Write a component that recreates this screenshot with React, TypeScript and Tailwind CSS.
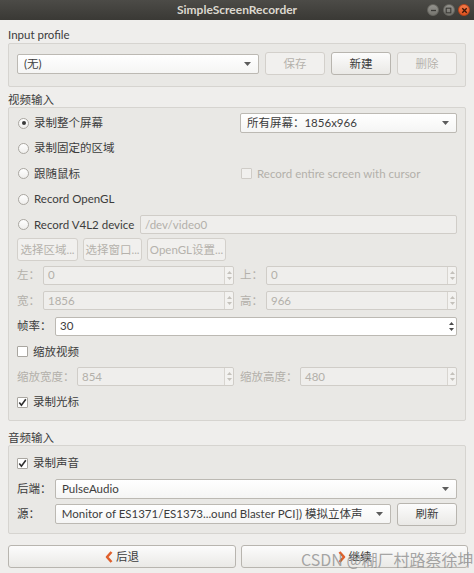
import type { ReactNode } from 'react';

const ink = 'text-[#3c3c3c]';
const dim = 'text-[#b3b0aa]';

function ArrowDown() {
  return (
    <svg width="7" height="4" viewBox="0 0 7 4" className="shrink-0">
      <path d="M0 0h7L3.5 4z" fill="#5c5c5c" />
    </svg>
  );
}

function Combo({ text, className = '' }: { text: string; className?: string }) {
  return (
    <div
      className={`flex h-[20px] items-center justify-between rounded-[2px] border border-[#bcb9b3] bg-linear-to-b from-white to-[#f5f5f4] pl-[6px] pr-[7px] ${ink} ${className}`}
    >
      <span className="truncate">{text}</span>
      <ArrowDown />
    </div>
  );
}

function Btn({
  children,
  disabled = false,
  className = '',
}: {
  children: ReactNode;
  disabled?: boolean;
  className?: string;
}) {
  return (
    <div
      className={`flex h-[23px] shrink-0 items-center justify-center rounded-[3px] border ${
        disabled
          ? 'border-[#d3d0cb] bg-[#f1f0ee] text-[#b5b2ac]'
          : 'border-[#b8b5af] bg-linear-to-b from-[#fcfcfc] to-[#eae9e6] text-[#3c3c3c]'
      } ${className}`}
    >
      {children}
    </div>
  );
}

function Spin({
  value,
  disabled = false,
  className = '',
}: {
  value: string;
  disabled?: boolean;
  className?: string;
}) {
  const fill = disabled ? '#c4c1bb' : '#4a4a4a';
  return (
    <div
      className={`flex h-[19px] shrink-0 items-stretch rounded-[2px] border ${
        disabled ? 'border-[#d0cdc8] bg-[#efeeec]' : 'border-[#bcb9b3] bg-white'
      } ${className}`}
    >
      <span className={`flex flex-1 items-center pl-[4px] ${disabled ? dim : ink}`}>{value}</span>
      <span
        className={`flex w-[9px] flex-col items-center justify-center gap-[3px] ${
          disabled ? 'rounded-r-[2px] border-l border-[#d8d5d0] bg-[#f3f2f0]' : ''
        }`}
      >
        <svg width="5" height="3" viewBox="0 0 5 3">
          <path d="M0 3h5L2.5 0z" fill={fill} />
        </svg>
        <svg width="5" height="3" viewBox="0 0 5 3">
          <path d="M0 0h5L2.5 3z" fill={fill} />
        </svg>
      </span>
    </div>
  );
}

function Radio({ checked = false, label }: { checked?: boolean; label: string }) {
  return (
    <div className="flex items-center">
      <span className="ml-[1px] flex h-[11px] w-[11px] shrink-0 items-center justify-center rounded-full border border-[#aaa7a1] bg-linear-to-b from-white to-[#efeeec]">
        {checked && <span className="h-[4px] w-[4px] rounded-full bg-[#3a3a3a]" />}
      </span>
      <span className={`ml-[5px] ${ink}`}>{label}</span>
    </div>
  );
}

function Check({
  checked = false,
  disabled = false,
  label,
}: {
  checked?: boolean;
  disabled?: boolean;
  label: string;
}) {
  return (
    <div className="flex items-center">
      <span
        className={`flex h-[11px] w-[11px] shrink-0 items-center justify-center rounded-[1px] border ${
          disabled ? 'border-[#cfccc7] bg-[#f1f0ee]' : 'border-[#a9a6a0] bg-white'
        }`}
      >
        {checked && (
          <svg width="9" height="9" viewBox="0 0 9 9">
            <path d="M1.3 4.6L3.4 7.2L7.8 1.2" fill="none" stroke="#2e2e2e" strokeWidth="1.6" />
          </svg>
        )}
      </span>
      <span className={`ml-[5px] ${disabled ? dim : ink}`}>{label}</span>
    </div>
  );
}

function Chevron({ dir }: { dir: 'left' | 'right' }) {
  return (
    <svg width="8" height="12" viewBox="0 0 8 12" className="shrink-0">
      <path
        d={dir === 'left' ? 'M6.5 1L2 6l4.5 5' : 'M1.5 1L6 6l-4.5 5'}
        fill="none"
        stroke="#e0602c"
        strokeWidth="2.6"
        strokeLinejoin="round"
      />
    </svg>
  );
}

function WinDot({ kind }: { kind: 'min' | 'max' | 'close' }) {
  const close = kind === 'close';
  return (
    <span
      className={`flex h-[12px] w-[12px] items-center justify-center rounded-full border ${
        close
          ? 'border-[#b8451d] bg-linear-to-b from-[#f47a48] to-[#e0531f]'
          : 'border-[#66655f] bg-linear-to-b from-[#93928d] to-[#76756f]'
      }`}
    >
      <svg width="7" height="7" viewBox="0 0 7 7">
        {kind === 'min' && <path d="M1 3.5h5" stroke="#3b3a36" strokeWidth="1.3" />}
        {kind === 'max' && (
          <rect x="1.2" y="1.2" width="4.6" height="4.6" fill="none" stroke="#3b3a36" strokeWidth="1.1" />
        )}
        {close && <path d="M1.3 1.3l4.4 4.4M5.7 1.3L1.3 5.7" stroke="#3a1608" strokeWidth="1.3" />}
      </svg>
    </span>
  );
}

const groupBox = 'rounded-[2px] border border-[#d6d4d0] bg-[#e9e8e5] px-[8px]';
const row = 'flex h-[22px] items-center';

export default function App() {
  return (
    <div
      className={`relative h-[573px] w-[474px] overflow-hidden bg-[#efeeec] font-[family-name:Lato,'Noto_Sans_CJK_SC',sans-serif] text-[11.5px] leading-[14px] ${ink}`}
    >
      {/* title bar */}
      <div className="grid h-[20px] grid-cols-[1fr_auto_1fr] items-center bg-linear-to-b from-[#4c4b47] to-[#3a3935]">
        <span />
        <span className="text-[12px] font-bold text-[#dcd8cf]">SimpleScreenRecorder</span>
        <div className="flex justify-end gap-[3.5px] pr-[4px]">
          <WinDot kind="min" />
          <WinDot kind="max" />
          <WinDot kind="close" />
        </div>
      </div>

      <div className="px-[8px]">
        <div className="mt-[8px]">Input profile</div>
        <div className={`mt-[1px] flex items-center gap-[6px] pt-[8px] pb-[11px] ${groupBox}`}>
          <Combo text="(无)" className="w-[246px]" />
          <Btn disabled className="w-[60px]">保存</Btn>
          <Btn className="w-[60px]">新建</Btn>
          <Btn disabled className="w-[60px]">删除</Btn>
        </div>

        <div className="mt-[6px]">视频输入</div>
        <div className={`flex flex-col gap-[3.4px] pt-[4px] pb-[7px] ${groupBox}`}>
          <div className={row}>
            <div className="w-[224px]">
              <Radio checked label="录制整个屏幕" />
            </div>
            <Combo text="所有屏幕：1856x966" className="w-[218px]" />
          </div>
          <div className={row}>
            <Radio label="录制固定的区域" />
          </div>
          <div className={row}>
            <div className="w-[224px]">
              <Radio label="跟随鼠标" />
            </div>
            <Check disabled label="Record entire screen with cursor" />
          </div>
          <div className={row}>
            <Radio label="Record OpenGL" />
          </div>
          <div className={row}>
            <Radio label="Record V4L2 device" />
            <div
              className={`ml-auto flex h-[19px] w-[317px] items-center rounded-[2px] border border-[#d0cdc8] bg-[#efeeec] pl-[4px] ${dim}`}
            >
              /dev/video0
            </div>
          </div>
          <div className={`${row} gap-[5px]`}>
            <Btn disabled className="w-[61px]">选择区域...</Btn>
            <Btn disabled className="w-[59px]">选择窗口...</Btn>
            <Btn disabled className="w-[79px]">OpenGL设置...</Btn>
          </div>
          <div className={row}>
            <span className={`w-[27px] ${dim}`}>左：</span>
            <Spin disabled value="0" className="w-[191px]" />
            <span className={`ml-[6px] w-[27px] ${dim}`}>上：</span>
            <Spin disabled value="0" className="w-[191px]" />
          </div>
          <div className={row}>
            <span className={`w-[27px] ${dim}`}>宽：</span>
            <Spin disabled value="1856" className="w-[191px]" />
            <span className={`ml-[6px] w-[27px] ${dim}`}>高：</span>
            <Spin disabled value="966" className="w-[191px]" />
          </div>
          <div className={row}>
            <span className="w-[38px]">帧率：</span>
            <Spin value="30" className="flex-1" />
          </div>
          <div className={row}>
            <Check label="缩放视频" />
          </div>
          <div className={row}>
            <span className={`w-[61px] ${dim}`}>缩放宽度：</span>
            <Spin disabled value="854" className="w-[157px]" />
            <span className={`ml-[6px] w-[61px] ${dim}`}>缩放高度：</span>
            <Spin disabled value="480" className="w-[157px]" />
          </div>
          <div className={row}>
            <Check checked label="录制光标" />
          </div>
        </div>

        <div className="mt-[10px]">音频输入</div>
        <div className={`flex flex-col gap-[3.4px] pt-[6px] pb-[8px] ${groupBox}`}>
          <div className={row}>
            <Check checked label="录制声音" />
          </div>
          <div className={row}>
            <span className="w-[38px]">后端：</span>
            <Combo text="PulseAudio" className="flex-1" />
          </div>
          <div className={row}>
            <span className="w-[38px]">源：</span>
            <Combo
              text="Monitor of ES1371/ES1373...ound Blaster PCI]) 模拟立体声"
              className="w-[338px]"
            />
            <Btn className="ml-[6px] w-[60px]">刷新</Btn>
          </div>
        </div>

        <div className="mt-[11px] flex gap-[5px]">
          <Btn className="w-[228px] gap-[3px]">
            <Chevron dir="left" />
            <span>后退</span>
          </Btn>
          <Btn className="w-[227px] gap-[3px]">
            <Chevron dir="right" />
            <span>继续</span>
          </Btn>
        </div>
      </div>

      {/* CSDN watermark lying over the bottom button */}
      <div className="pointer-events-none absolute left-[301px] top-[549px] font-[family-name:'Noto_Sans_CJK_SC',sans-serif] text-[16px] leading-[20px] text-[#8f8f8f]/80">
        CSDN @糊厂村路蔡徐坤
      </div>
    </div>
  );
}
